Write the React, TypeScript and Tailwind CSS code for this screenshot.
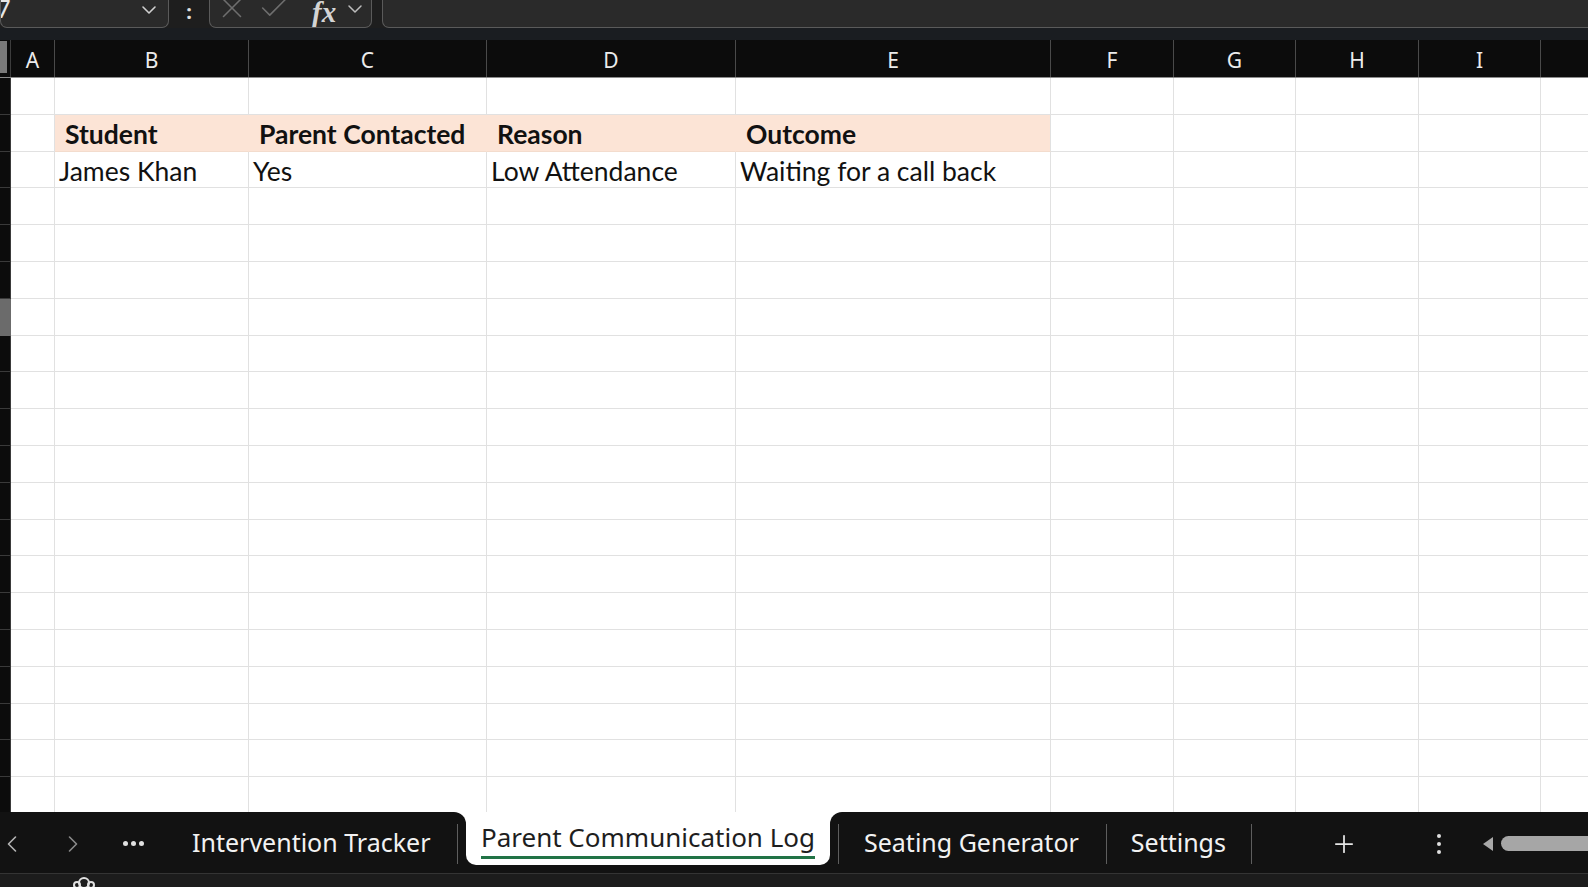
import { ChevronLeft, ChevronRight, ChevronDown, Plus, X, Check } from "lucide-react";

const COLS = [
  { id: "A", cls: "w-[44px]" },
  { id: "B", cls: "w-[194px]" },
  { id: "C", cls: "w-[238px]" },
  { id: "D", cls: "w-[249px]" },
  { id: "E", cls: "w-[315px]" },
  { id: "F", cls: "w-[123px]" },
  { id: "G", cls: "w-[122px]" },
  { id: "H", cls: "w-[123px]" },
  { id: "I", cls: "w-[122px]" },
  { id: "J", cls: "w-[200px]" },
];

const HEADER_ROW: Record<string, string> = {
  B: "Student",
  C: "Parent Contacted",
  D: "Reason",
  E: "Outcome",
};

const DATA_ROW: Record<string, string> = {
  B: "James Khan",
  C: "Yes",
  D: "Low Attendance",
  E: "Waiting for a call back",
};

const ROW_COUNT = 21;

function TopBox(props: { className: string; children?: React.ReactNode }) {
  return (
    <div
      className={[
        "h-[28px] bg-[#2a2a2a] border border-t-0 border-[#5a5a5a] rounded-b-[7px] relative flex items-center overflow-hidden shrink-0",
        props.className,
      ].join(" ")}
    >
      {props.children}
    </div>
  );
}

function FormulaBar() {
  return (
    <div className="h-[28px] bg-[#1e1e1e] flex items-start shrink-0">
      <TopBox className="w-[169px]">
        <span className="absolute -left-[5px] -top-[11px] text-[26px] text-[#e6e6e6] font-['Noto_Sans',sans-serif]">7</span>
        <ChevronDown className="absolute left-[136px] -top-[2px] text-[#d0d0d0]" size={24} strokeWidth={1.6} />
      </TopBox>
      <div className="w-[40px] flex justify-center pt-[1px]">
        <span className="text-[20px] leading-[22px] font-bold text-[#e0e0e0] font-['Noto_Sans',sans-serif]">:</span>
      </div>
      <TopBox className="w-[163px]">
        <X className="absolute left-[5px] -top-[9px] text-[#6e6e6e]" size={34} strokeWidth={1.1} />
        <Check className="absolute left-[47px] -top-[9px] text-[#6e6e6e]" size={34} strokeWidth={1.1} />
        <span className="absolute left-[102px] -top-[9px] text-[29px] italic font-bold text-[#d4d4d4] font-['Liberation_Serif',serif]">
          fx
        </span>
        <ChevronDown className="absolute left-[133px] -top-[3px] text-[#bdbdbd]" size={24} strokeWidth={1.5} />
      </TopBox>
      <div className="w-[10px]" />
      <TopBox className="flex-1 rounded-br-none border-r-0" />
    </div>
  );
}

function ColumnHeader() {
  return (
    <div className="h-[38px] flex bg-[#0c0c0c] border-b border-[#8c8c8c] shrink-0">
      <div className="w-[11px] shrink-0 flex items-start pt-[1px] border-r border-[#3c3c3c]">
        <div className="w-[7px] h-[32px] bg-[#7a7a7a]" />
      </div>
      {COLS.map((c) => (
        <div
          key={c.id}
          className={[
            c.cls,
            "shrink-0 border-r border-[#4a4a4a] flex items-center justify-center text-[21px] text-[#ececec] font-['Noto_Sans',sans-serif] pt-[5px]",
          ].join(" ")}
        >
          {c.id}
        </div>
      ))}
    </div>
  );
}

function BodyRow(props: { index: number }) {
  const isHeader = props.index === 1;
  const isData = props.index === 2;
  const selected = props.index === 6;
  return (
    <div className="h-[36.8px] flex shrink-0">
      <div
        className={[
          "w-[11px] shrink-0 border-b border-r",
          selected ? "bg-[#6b6b6b] border-[#6b6b6b]" : "bg-[#0c0c0c] border-b-[#3a3a3a] border-r-[#3a3a3a]",
        ].join(" ")}
      />
      {COLS.map((c) => {
        const peach = isHeader && HEADER_ROW[c.id] !== undefined;
        const text = isHeader ? HEADER_ROW[c.id] : isData ? DATA_ROW[c.id] : undefined;
        return (
          <div
            key={c.id}
            className={[
              c.cls,
              "shrink-0 border-b flex items-end overflow-visible whitespace-nowrap font-['Lato',sans-serif] text-[26.5px] leading-none text-[#111]",
              peach ? "bg-[#fce4d6] border-b-[#f3dccd]" : "bg-white border-b-[#e1e1e1]",
              peach && c.id !== "E" ? "border-r border-r-[#fce4d6]" : "border-r border-r-[#e1e1e1]",
              isHeader ? "font-bold pl-[10px] pb-[3px]" : "pl-[4px] pb-[3px]",
            ].join(" ")}
          >
            {text}
          </div>
        );
      })}
    </div>
  );
}

function Divider() {
  return <div className="w-px h-[40px] bg-[#5e5e5e] shrink-0" />;
}

function SheetTabs() {
  return (
    <div className="h-[61px] flex bg-white shrink-0 font-['Noto_Sans',sans-serif]">
      <div className="w-[466px] bg-[#121212] rounded-tr-[12px] flex items-center shrink-0 pt-[2px]">
        <ChevronLeft className="-ml-[2px] text-[#b4b4b4]" size={28} strokeWidth={1.4} />
        <ChevronRight className="ml-[33px] text-[#8a8a8a]" size={28} strokeWidth={1.4} />
        <div className="ml-[36px] flex gap-[3px]">
          <span className="w-[5px] h-[5px] rounded-full bg-[#e0e0e0]" />
          <span className="w-[5px] h-[5px] rounded-full bg-[#e0e0e0]" />
          <span className="w-[5px] h-[5px] rounded-full bg-[#e0e0e0]" />
        </div>
        <span className="ml-[48px] text-[25px] text-[#f2f2f2] leading-none pb-[2px]">Intervention Tracker</span>
        <div className="ml-[27px] self-center">
          <Divider />
        </div>
      </div>
      <div className="w-[364px] bg-[#121212] shrink-0">
        <div className="h-[53px] bg-white rounded-b-[10px] flex justify-center pt-[12px]">
          <div className="flex flex-col">
            <span className="text-[26px] text-[#1e1e1e] leading-none">Parent Communication Log</span>
            <div className="mt-[6px] h-[3px] bg-[#217346]" />
          </div>
        </div>
      </div>
      <div className="flex-1 bg-[#121212] rounded-tl-[12px] flex items-center pt-[2px]">
        <div className="ml-[8px]">
          <Divider />
        </div>
        <span className="ml-[25px] text-[25px] text-[#f2f2f2] leading-none pb-[2px]">Seating Generator</span>
        <div className="ml-[27px]">
          <Divider />
        </div>
        <span className="ml-[24px] text-[25px] text-[#f2f2f2] leading-none pb-[2px]">Settings</span>
        <div className="ml-[25px]">
          <Divider />
        </div>
        <Plus className="ml-[78px] text-[#e6e6e6]" size={28} strokeWidth={1.5} />
        <div className="ml-[79px] flex flex-col gap-[4px]">
          <span className="w-[4px] h-[4px] rounded-full bg-[#e0e0e0]" />
          <span className="w-[4px] h-[4px] rounded-full bg-[#e0e0e0]" />
          <span className="w-[4px] h-[4px] rounded-full bg-[#e0e0e0]" />
        </div>
        <div className="ml-[42px] w-0 h-0 border-y-[7px] border-y-transparent border-r-[10px] border-r-[#a8a8a8]" />
        <div className="ml-[8px] flex-1 h-[15px] rounded-l-full bg-[#a6a6a6]" />
      </div>
    </div>
  );
}

function StatusStrip() {
  return (
    <div className="flex-1 bg-[#1c1c1c] border-t border-[#343434] relative overflow-hidden">
      <svg className="absolute left-[72px] top-[1px]" width="24" height="14" viewBox="0 0 24 14">
        <circle cx="12" cy="8" r="5" fill="none" stroke="#e0e0e0" strokeWidth="2" />
        <circle cx="5" cy="10" r="3" fill="none" stroke="#e0e0e0" strokeWidth="2" />
        <circle cx="19" cy="10" r="3" fill="none" stroke="#e0e0e0" strokeWidth="2" />
      </svg>
    </div>
  );
}

export default function App() {
  return (
    <div className="w-[1588px] h-[887px] overflow-hidden flex flex-col bg-[#121212]">
      <FormulaBar />
      <div className="h-[12px] bg-[#1a1d21] shrink-0" />
      <ColumnHeader />
      <div className="h-[734px] overflow-hidden flex flex-col bg-white shrink-0">
        {Array.from({ length: ROW_COUNT }).map((_, i) => (
          <BodyRow key={i} index={i} />
        ))}
      </div>
      <SheetTabs />
      <StatusStrip />
    </div>
  );
}
